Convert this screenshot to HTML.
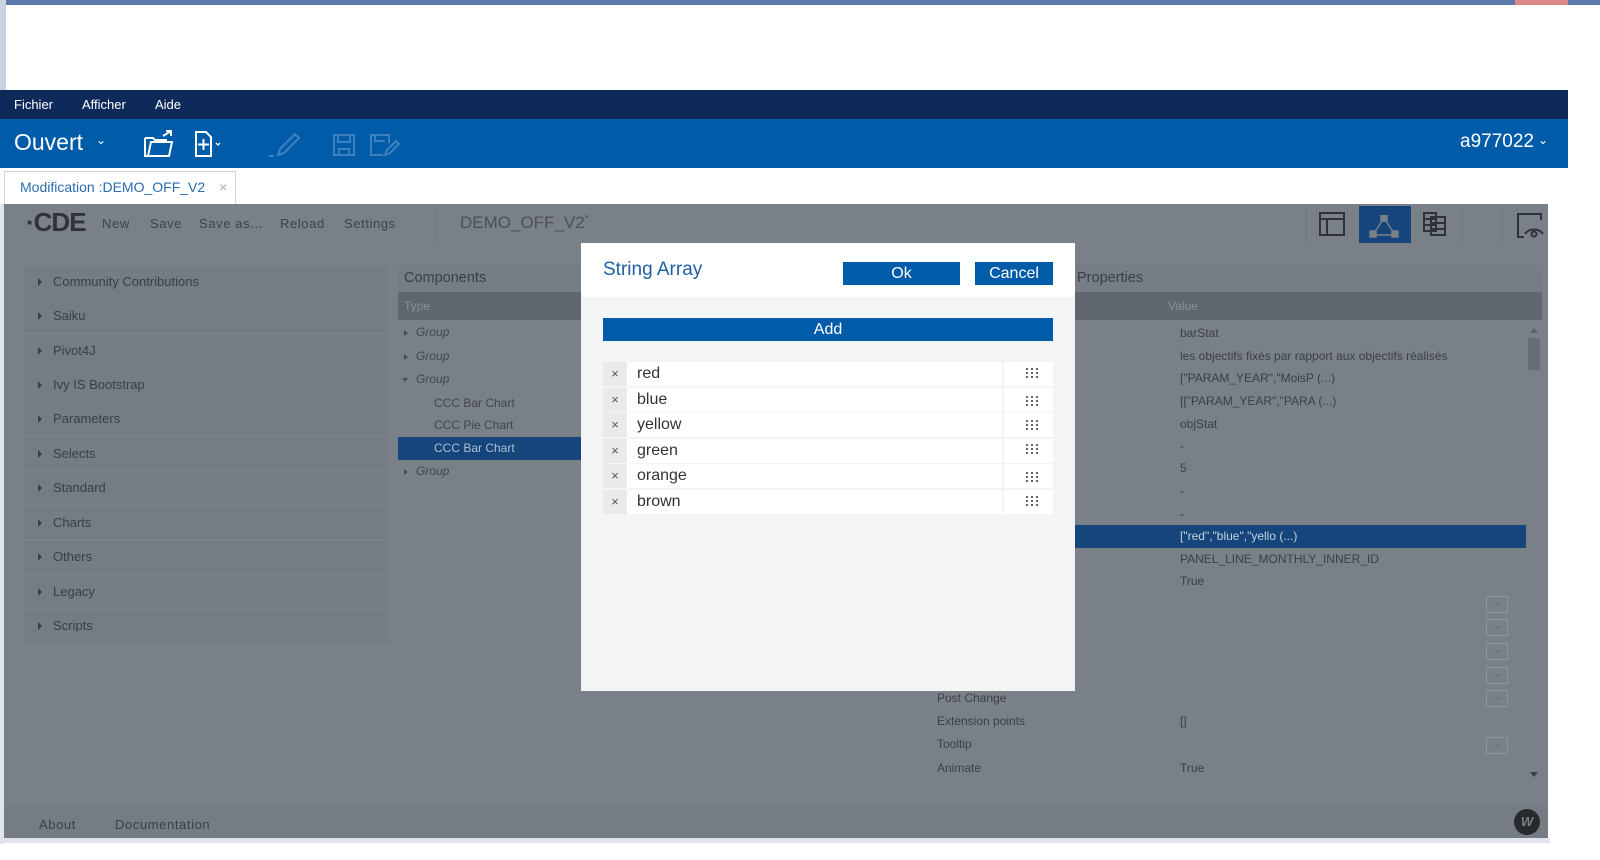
<!DOCTYPE html>
<html><head><meta charset="utf-8"><style>
*{box-sizing:border-box;margin:0;padding:0}
html{width:1600px;height:860px;overflow:hidden}
body{width:1600px;height:860px;position:relative;overflow:hidden;background:#fff;font-family:"Liberation Sans",sans-serif}
.a{position:absolute;white-space:nowrap}
.ui{font-family:"Liberation Sans",sans-serif}
.li{position:absolute;left:24px;width:364px;height:32px;background:#757c83;color:#3a3f45;font-size:13px;line-height:32px;padding-left:29px}
.li:before{content:"";position:absolute;left:14px;top:12px;border-left:4px solid #3a3f45;border-top:4px solid transparent;border-bottom:4px solid transparent}
.ct{position:absolute;left:398px;width:520px;height:23px;font-size:12px;color:#42474d;line-height:23px}
.pv{position:absolute;left:1180px;font-size:12px;color:#3a3f45;white-space:nowrap}
.pl{position:absolute;left:937px;font-size:12px;color:#3a3f45}
.dots{position:absolute;left:1486px;width:22px;height:17px;border:1px solid #8e949a;font-size:10px;color:#555;text-align:center;line-height:12px}
.row{position:absolute;left:603px;width:450px;height:24px}
.row .x{position:absolute;left:0;width:24px;height:24px;background:#e8eaec;color:#555;font-size:13px;text-align:center;line-height:23px}
.row .v{position:absolute;left:24px;width:375px;height:24px;background:#fff;font-size:16px;color:#333;line-height:24px;padding-left:10px}
.row .h{position:absolute;left:401px;width:49px;height:24px;background:#fff}
</style></head><body>
<div class="a" style="left:0;top:0;width:1600px;height:5px;background:#5a7ba8"></div>
<div class="a" style="left:0;top:0;width:6px;height:90px;background:#c8d4e2"></div>
<div class="a" style="left:6px;top:5px;width:1562px;height:85px;background:#fff"></div>
<div class="a" style="left:1515px;top:0;width:53px;height:5px;background:#d88"></div>
<div class="a ui" style="left:0;top:90px;width:1568px;height:29px;background:#0f2a5a;color:#fff;font-size:13px;line-height:29px">
<span class="a" style="left:14px">Fichier</span><span class="a" style="left:82px">Afficher</span><span class="a" style="left:155px">Aide</span></div>
<div class="a ui" style="left:0;top:119px;width:1568px;height:49px;background:#005ca8;color:#fff">
<span class="a" style="left:14px;top:10px;font-size:23px">Ouvert</span>
<span class="a" style="left:96px;top:14px;font-size:12px">&#8964;</span>
<svg class="a" style="left:143px;top:11px" width="32" height="28" viewBox="0 0 32 28" fill="none" stroke="#fff" stroke-width="2"><path d="M2 8v18h24l3-14H8L5 26M2 8h8l2 2h12"/><path d="M20 6l8-5M23 1h5v5"/></svg>
<svg class="a" style="left:194px;top:12px" width="30" height="26" viewBox="0 0 30 26" fill="none" stroke="#fff" stroke-width="2"><path d="M2 1h10l5 5v19H2z"/><path d="M9.5 8v11M4 13.5h11"/><path d="M22 12l2 2 2-2" stroke-width="1.3"/></svg>
<svg class="a" style="left:268px;top:12px" width="34" height="26" viewBox="0 0 34 26" fill="none" stroke="#3d82c0" stroke-width="2"><path d="M1 25h5M10 24l2-6L27 3l4 4-15 15z"/></svg>
<svg class="a" style="left:332px;top:14px" width="24" height="24" viewBox="0 0 24 24" fill="none" stroke="#3d82c0" stroke-width="2"><path d="M2 2h20v20H2zM6 2v7h12V2M7 22v-6h10v6"/></svg>
<svg class="a" style="left:369px;top:14px" width="32" height="24" viewBox="0 0 32 24" fill="none" stroke="#3d82c0" stroke-width="2"><path d="M14 22H2V2h18v8M6 2v6h10"/><path d="M16 22l2-5 9-9 3 3-9 9z"/></svg>
<span class="a" style="left:1460px;top:12px;font-size:19px">a977022</span>
<span class="a" style="left:1538px;top:14px;font-size:12px">&#8964;</span>
</div>
<div class="a ui" style="left:4px;top:171px;width:232px;height:33px;border:1px solid #d0d4d8;border-bottom:none;background:#fff;font-size:14px;color:#2a6db0;line-height:31px;padding-left:15px">Modification :DEMO_OFF_V2<span style="color:#aab;margin-left:14px">×</span></div>
<div class="a" style="left:4px;top:204px;width:1544px;height:636px;background:#7a8087"></div>
<div class="a" style="left:0;top:204px;width:4px;height:640px;background:#dfe5ea"></div>
<div class="a" style="left:0;top:838px;width:1550px;height:5px;background:#dfe5ea"></div>
<div class="a ui" style="left:26px;top:207px;font-size:26px;font-weight:bold;color:#2f3338;letter-spacing:-1px">·CDE</div>
<div class="a ui" style="left:102px;top:216px;font-size:13px;color:#3e4349;letter-spacing:.6px">
<span class="a" style="left:0">New</span><span class="a" style="left:48px">Save</span><span class="a" style="left:97px">Save as...</span><span class="a" style="left:178px">Reload</span><span class="a" style="left:242px">Settings</span></div>
<div class="a" style="left:436px;top:206px;width:1px;height:36px;background:#6e747b"></div>
<div class="a ui" style="left:460px;top:213px;font-size:17px;color:#4b5056">DEMO_OFF_V2<sup style="font-size:10px">*</sup></div>
<div class="a" style="left:1306px;top:206px;width:1px;height:36px;background:#6e747b"></div>
<div class="a" style="left:1359px;top:206px;width:52px;height:37px;background:#15457a"></div>
<div class="a" style="left:1462px;top:206px;width:1px;height:36px;background:#6e747b"></div>
<div class="a" style="left:1502px;top:206px;width:1px;height:36px;background:#6e747b"></div>
<svg class="a" style="left:1319px;top:212px" width="26" height="24" viewBox="0 0 26 24" fill="none" stroke="#2f3338" stroke-width="2"><path d="M1 1h24v22H1zM1 7h24M8 7v16"/></svg>
<svg class="a" style="left:1369px;top:215px" width="30" height="23" viewBox="0 0 30 23" fill="#7a8087" stroke="#7a8087" stroke-width="1.5"><path d="M15 3L4 20h22z" fill="none"/><rect x="12" y="0" width="6" height="6"/><rect x="1" y="16" width="6" height="6"/><rect x="23" y="16" width="6" height="6"/></svg>
<svg class="a" style="left:1422px;top:211px" width="26" height="26" viewBox="0 0 26 26" fill="none" stroke="#2f3338" stroke-width="2"><path d="M2 2h12v18H2zM2 8h12M2 14h12M9 6h14v18H9zM9 12h14M9 18h14"/></svg>
<svg class="a" style="left:1516px;top:212px" width="32" height="26" viewBox="0 0 32 26" fill="none" stroke="#2f3338" stroke-width="2"><path d="M8 25H2V2h23v6"/><path d="M9 22c4-6 14-6 18 0"/><circle cx="18" cy="22" r="2.5"/></svg>
<div class="li ui" style="top:266px">Community Contributions</div>
<div class="li ui" style="top:300px">Saiku</div>
<div class="li ui" style="top:335px">Pivot4J</div>
<div class="li ui" style="top:369px">Ivy IS Bootstrap</div>
<div class="li ui" style="top:403px">Parameters</div>
<div class="li ui" style="top:438px">Selects</div>
<div class="li ui" style="top:472px">Standard</div>
<div class="li ui" style="top:507px">Charts</div>
<div class="li ui" style="top:541px">Others</div>
<div class="li ui" style="top:576px">Legacy</div>
<div class="li ui" style="top:610px">Scripts</div>
<div class="a" style="left:398px;top:265px;width:520px;height:27px;background:#767d84"></div>
<div class="a ui" style="left:404px;top:270px;font-size:14.5px;color:#3a3f45">Components</div>
<div class="a" style="left:398px;top:292px;width:1144px;height:28px;background:#5f666d"></div>
<div class="a ui" style="left:404px;top:299px;font-size:12px;color:#8a9096">Type</div>
<div class="a ui" style="left:1168px;top:299px;font-size:12px;color:#8a9096">Value</div>
<div class="a" style="left:1075px;top:265px;width:467px;height:27px;background:#767d84"></div>
<div class="a ui" style="left:1077px;top:270px;font-size:14.5px;color:#3a3f45">Properties</div>
<div class="ct ui" style="top:321px;padding-left:18px;font-style:italic">Group</div>
<div class="ct ui" style="top:345px;padding-left:18px;font-style:italic">Group</div>
<div class="ct ui" style="top:368px;padding-left:18px;font-style:italic">Group</div>
<div class="ct ui" style="top:392px;padding-left:36px">CCC Bar Chart</div>
<div class="ct ui" style="top:414px;padding-left:36px">CCC Pie Chart</div>
<div class="ct ui" style="top:437px;padding-left:36px;background:#15457a;color:#aebfd2">CCC Bar Chart</div>
<div class="ct ui" style="top:460px;padding-left:18px;font-style:italic">Group</div>
<div class="a" style="left:404px;top:330px;border-left:4px solid #4a4f55;border-top:3px solid transparent;border-bottom:3px solid transparent"></div>
<div class="a" style="left:404px;top:354px;border-left:4px solid #4a4f55;border-top:3px solid transparent;border-bottom:3px solid transparent"></div>
<div class="a" style="left:402px;top:378px;border-top:4px solid #4a4f55;border-left:3px solid transparent;border-right:3px solid transparent"></div>
<div class="a" style="left:404px;top:469px;border-left:4px solid #4a4f55;border-top:3px solid transparent;border-bottom:3px solid transparent"></div>
<div class="pv ui" style="top:326px">barStat</div>
<div class="pv ui" style="top:349px">les objectifs fixés par rapport aux objectifs réalisés</div>
<div class="pv ui" style="top:371px">["PARAM_YEAR","MoisP (...)</div>
<div class="pv ui" style="top:394px">[["PARAM_YEAR","PARA (...)</div>
<div class="pv ui" style="top:417px">objStat</div>
<div class="pv ui" style="top:439px">-</div>
<div class="pv ui" style="top:461px">5</div>
<div class="pv ui" style="top:484px">-</div>
<div class="pv ui" style="top:507px">-</div>
<div class="a" style="left:1075px;top:525px;width:451px;height:23px;background:#15457a"></div>
<div class="pv ui" style="top:529px;color:#c5d2e0">["red","blue","yello (...)</div>
<div class="pv ui" style="top:552px">PANEL_LINE_MONTHLY_INNER_ID</div>
<div class="pv ui" style="top:574px">True</div>
<div class="dots" style="top:596px">...</div>
<div class="dots" style="top:619px">...</div>
<div class="dots" style="top:643px">...</div>
<div class="dots" style="top:667px">...</div>
<div class="dots" style="top:690px">...</div>
<div class="dots" style="top:737px">...</div>
<div class="pl ui" style="top:691px">Post Change</div>
<div class="pl ui" style="top:714px">Extension points</div>
<div class="pv ui" style="top:714px">[]</div>
<div class="pl ui" style="top:737px">Tooltip</div>
<div class="pl ui" style="top:761px">Animate</div>
<div class="pv ui" style="top:761px">True</div>
<div class="a" style="left:1528px;top:338px;width:12px;height:32px;background:#666d74"></div>
<div class="a" style="left:1530px;top:328px;border-bottom:5px solid #5a6066;border-left:4px solid transparent;border-right:4px solid transparent"></div>
<div class="a" style="left:1530px;top:772px;border-top:5px solid #3a3f45;border-left:4px solid transparent;border-right:4px solid transparent"></div>
<div class="a" style="left:4px;top:806px;width:1544px;height:32px;background:#767c83"></div>
<div class="a ui" style="left:39px;top:817px;font-size:13px;color:#3a3f45;letter-spacing:.6px">About</div>
<div class="a ui" style="left:115px;top:817px;font-size:13px;color:#3a3f45;letter-spacing:.6px">Documentation</div>
<div class="a ui" style="left:1514px;top:809px;width:26px;height:26px;border-radius:50%;background:#262a2e;color:#7a8087;font-size:13px;font-weight:bold;font-style:italic;text-align:center;line-height:26px">W</div>
<div class="a" style="left:581px;top:243px;width:494px;height:448px;background:#f3f4f6"></div>
<div class="a" style="left:581px;top:243px;width:494px;height:54px;background:#fff"></div>
<div class="a" style="left:603px;top:259px;font-size:19px;color:#1f5fa6">String Array</div>
<div class="a" style="left:843px;top:262px;width:117px;height:23px;background:#005ca8;color:#fff;font-size:16px;text-align:center;line-height:23px">Ok</div>
<div class="a" style="left:975px;top:262px;width:78px;height:23px;background:#005ca8;color:#fff;font-size:16px;text-align:center;line-height:23px">Cancel</div>
<div class="a" style="left:603px;top:318px;width:450px;height:23px;background:#005ca8;color:#fff;font-size:16px;text-align:center;line-height:23px">Add</div>
<div class="row" style="top:362px"><div class="x">×</div><div class="v">red</div><div class="h"></div></div>
<div class="row" style="top:388px"><div class="x">×</div><div class="v">blue</div><div class="h"></div></div>
<div class="row" style="top:413px"><div class="x">×</div><div class="v">yellow</div><div class="h"></div></div>
<div class="row" style="top:439px"><div class="x">×</div><div class="v">green</div><div class="h"></div></div>
<div class="row" style="top:464px"><div class="x">×</div><div class="v">orange</div><div class="h"></div></div>
<div class="row" style="top:490px"><div class="x">×</div><div class="v">brown</div><div class="h"></div></div>
<svg class="a" style="left:1026px;top:368px" width="14" height="140">
<defs><pattern id="p" width="5" height="4" patternUnits="userSpaceOnUse"><rect width="2" height="2" fill="#666"/></pattern></defs>
<rect x="0" y="0" width="12" height="12" fill="url(#p)"/>
<rect x="0" y="26" width="12" height="12" fill="url(#p)"/>
<rect x="0" y="51" width="12" height="12" fill="url(#p)"/>
<rect x="0" y="76" width="12" height="12" fill="url(#p)"/>
<rect x="0" y="102" width="12" height="12" fill="url(#p)"/>
<rect x="0" y="127" width="12" height="12" fill="url(#p)"/>
</svg>
</body></html>
